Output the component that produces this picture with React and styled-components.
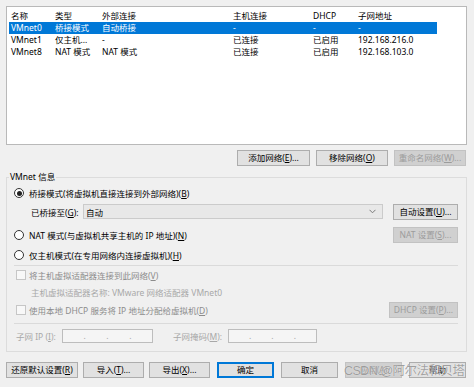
import React from 'react';
import styled, { createGlobalStyle } from 'styled-components';

const Global = createGlobalStyle`
  html, body { margin: 0; padding: 0; background: #f0f0f0; }
  body {
    font-family: "Noto Sans", "Noto Sans CJK SC", sans-serif;
    font-size: 8.5px;
    color: #000;
  }
  * { box-sizing: border-box; }
`;

const Window = styled.div`
  position: relative;
  width: 474px;
  height: 387px;
  overflow: hidden;
  background: #f0f0f0;
  padding: 6px 7px 0 6px;
  display: flex;
  flex-direction: column;
`;

const ListBox = styled.div`
  height: 139px;
  background: #fff;
  border: 1px solid #b9b9b9;
  padding: 3px 0 0 2px;
`;

const Row = styled.div`
  display: grid;
  grid-template-columns: 44px 47px 131px 80px 45px 81px;
  width: 428px;
  height: 12px;
  line-height: 12px;
  background: ${p => (p.$selected ? '#0078d7' : 'transparent')};
  color: ${p => (p.$selected ? '#fff' : '#000')};
`;

const Cell = styled.div`
  padding-left: 2px;
  white-space: nowrap;
  overflow: hidden;
`;

const ActionBar = styled.div`
  display: flex;
  justify-content: flex-end;
  gap: 6px;
  margin-top: 5px;
  padding-right: 1px;
`;

const Button = styled.button`
  flex: none;
  width: ${p => p.$w}px;
  height: 16px;
  padding: 0;
  margin: 0;
  font: inherit;
  line-height: 14px;
  white-space: nowrap;
  color: #000;
  background: #e1e1e1;
  border: 1px solid ${p => (p.$primary ? '#0078d7' : '#adadad')};
  box-shadow: ${p => (p.$primary ? 'inset 0 0 0 1px #0078d7' : 'none')};
  &:disabled {
    color: #9c9c9c;
    background: #d0d0d0;
    border-color: #c2c2c2;
  }
  u { text-decoration: underline; }
`;

const Group = styled.fieldset`
  margin: 5px 0 0 0;
  padding: 0;
  min-width: 0;
  border: 1px solid #dcdcdc;
`;

const Legend = styled.legend`
  margin-left: 2px;
  padding: 0 1px;
  line-height: 12px;
  height: 12px;
`;

const GroupBody = styled.div`
  display: flex;
  flex-direction: column;
  padding: 4px 8px 8px 7px;
`;

const Line = styled.div`
  display: flex;
  align-items: center;
  height: ${p => p.$h || 12}px;
  margin-top: ${p => p.$mt || 0}px;
  padding-left: ${p => p.$pl || 0}px;
  color: ${p => p.$muted || 'inherit'};
  white-space: nowrap;
`;

const Separator = styled.div`
  height: 1px;
  margin-top: ${p => p.$mt}px;
  background: #dadada;
`;

const RadioMark = styled.span`
  flex: none;
  width: 10px;
  height: 10px;
  margin-right: 5px;
  border-radius: 50%;
  border: 1px solid #333;
  background: #fff;
  display: flex;
  align-items: center;
  justify-content: center;
  &::after {
    content: '';
    display: ${p => (p.$checked ? 'block' : 'none')};
    width: 5px;
    height: 5px;
    border-radius: 50%;
    background: #222;
  }
`;

const CheckMark = styled.span`
  flex: none;
  width: 10px;
  height: 10px;
  margin: 0 3px 0 2px;
  border: 1px solid #c6c6c6;
  background: #f8f8f8;
`;

const FieldLabel = styled.span`
  flex: none;
  width: ${p => p.$w}px;
  padding-left: ${p => p.$pl || 0}px;
`;

const Select = styled.div`
  flex: 1;
  height: 15px;
  display: flex;
  align-items: center;
  justify-content: space-between;
  padding: 0 6px 0 2px;
  background: #e8e8e8;
  border: 1px solid #cbcbcb;
`;

const PushRight = styled.div`
  margin-left: ${p => p.$ml || 'auto'};
  display: flex;
`;

const IpBox = styled.div`
  flex: none;
  width: ${p => p.$w}px;
  height: 14px;
  display: flex;
  align-items: center;
  justify-content: space-evenly;
  background: #f5f5f5;
  border: 1px solid #bdbdbd;
  color: #a5a5a5;
  line-height: 10px;
`;

const Footer = styled.div`
  display: flex;
  justify-content: space-between;
  margin-top: 10px;
  padding-right: 1px;
`;

const ButtonGroup = styled.div`
  display: flex;
  gap: ${p => p.$gap}px;
`;

const Watermark = styled.div`
  position: absolute;
  left: 344px;
  top: 363px;
  font-family: "Liberation Sans", "Noto Sans CJK SC", sans-serif;
  font-size: 12.5px;
  line-height: 16px;
  letter-spacing: -0.5px;
  color: rgba(125, 125, 125, 0.72);
  text-shadow: 0 0 1px rgba(255, 255, 255, 0.9);
  white-space: nowrap;
  pointer-events: none;
`;

const Chevron = () => (
  <svg width="7" height="5" viewBox="0 0 7 5">
    <path d="M0.5 0.8 L3.5 3.8 L6.5 0.8" fill="none" stroke="#7a7a7a" strokeWidth="1" />
  </svg>
);

const rows = [
  { sel: true, c: ['VMnet0', '桥接模式', '自动桥接', '-', '-', '-'] },
  { c: ['VMnet1', '仅主机...', '-', '已连接', '已启用', '192.168.216.0'] },
  { c: ['VMnet8', 'NAT 模式', 'NAT 模式', '已连接', '已启用', '192.168.103.0'] },
];

const header = ['名称', '类型', '外部连接', '主机连接', 'DHCP', '子网地址'];

const MUTED = '#8c8c8c';
const FAINT = '#a8a8a8';

export default function App() {
  return (
    <>
      <Global />
      <Window>
        <ListBox>
          <Row>
            {header.map(h => <Cell key={h}>{h}</Cell>)}
          </Row>
          {rows.map((r, i) => (
            <Row key={i} $selected={r.sel}>
              {r.c.map((c, j) => <Cell key={j}>{c}</Cell>)}
            </Row>
          ))}
        </ListBox>

        <ActionBar>
          <Button $w={73}>添加网络(<u>E</u>)...</Button>
          <Button $w={72}>移除网络(<u>O</u>)</Button>
          <Button $w={72} disabled>重命名网络(<u>W</u>)...</Button>
        </ActionBar>

        <Group>
          <Legend>VMnet 信息</Legend>
          <GroupBody>
            <Line>
              <RadioMark $checked />
              <span>桥接模式(将虚拟机直接连接到外部网络)(<u>B</u>)</span>
            </Line>
            <Line $h={15} $mt={5} $pl={17}>
              <FieldLabel $w={52}>已桥接至(<u>G</u>):</FieldLabel>
              <Select>
                <span>自动</span>
                <Chevron />
              </Select>
              <PushRight $ml="10px">
                <Button $w={65}>自动设置(<u>U</u>)...</Button>
              </PushRight>
            </Line>
            <Line $h={15} $mt={8}>
              <RadioMark />
              <span>NAT 模式(与虚拟机共享主机的 IP 地址)(<u>N</u>)</span>
              <PushRight>
                <Button $w={65} disabled>NAT 设置(<u>S</u>)...</Button>
              </PushRight>
            </Line>
            <Line $mt={7}>
              <RadioMark />
              <span>仅主机模式(在专用网络内连接虚拟机)(<u>H</u>)</span>
            </Line>
            <Separator $mt={4} />
            <Line $mt={3} $muted={MUTED}>
              <CheckMark />
              <span>将主机虚拟适配器连接到此网络(<u>V</u>)</span>
            </Line>
            <Line $mt={5} $pl={17} $muted={FAINT}>
              主机虚拟适配器名称: VMware 网络适配器 VMnet0
            </Line>
            <Line $h={16} $mt={4} $muted={MUTED}>
              <CheckMark />
              <span>使用本地 DHCP 服务将 IP 地址分配给虚拟机(<u>D</u>)</span>
              <PushRight>
                <Button $w={69} disabled>DHCP 设置(<u>P</u>)...</Button>
              </PushRight>
            </Line>
            <Separator $mt={5} />
            <Line $h={14} $mt={5} $pl={2} $muted={FAINT}>
              <FieldLabel $w={46}>子网 IP (<u>I</u>):</FieldLabel>
              <IpBox $w={91}><span>.</span><span>.</span><span>.</span></IpBox>
              <FieldLabel $w={75} $pl={20}>子网掩码(<u>M</u>):</FieldLabel>
              <IpBox $w={89}><span>.</span><span>.</span><span>.</span></IpBox>
            </Line>
          </GroupBody>
        </Group>

        <Footer>
          <ButtonGroup $gap={5}>
            <Button $w={72}>还原默认设置(<u>R</u>)</Button>
            <Button $w={61}>导入(<u>T</u>)...</Button>
            <Button $w={61}>导出(<u>X</u>)...</Button>
          </ButtonGroup>
          <ButtonGroup $gap={7}>
            <Button $w={57} $primary>确定</Button>
            <Button $w={57}>取消</Button>
            <Button $w={57} disabled>应用(<u>A</u>)</Button>
            <Button $w={57}>帮助</Button>
          </ButtonGroup>
        </Footer>

        <Watermark>CSDN @阿尔法和贝塔</Watermark>
      </Window>
    </>
  );
}
